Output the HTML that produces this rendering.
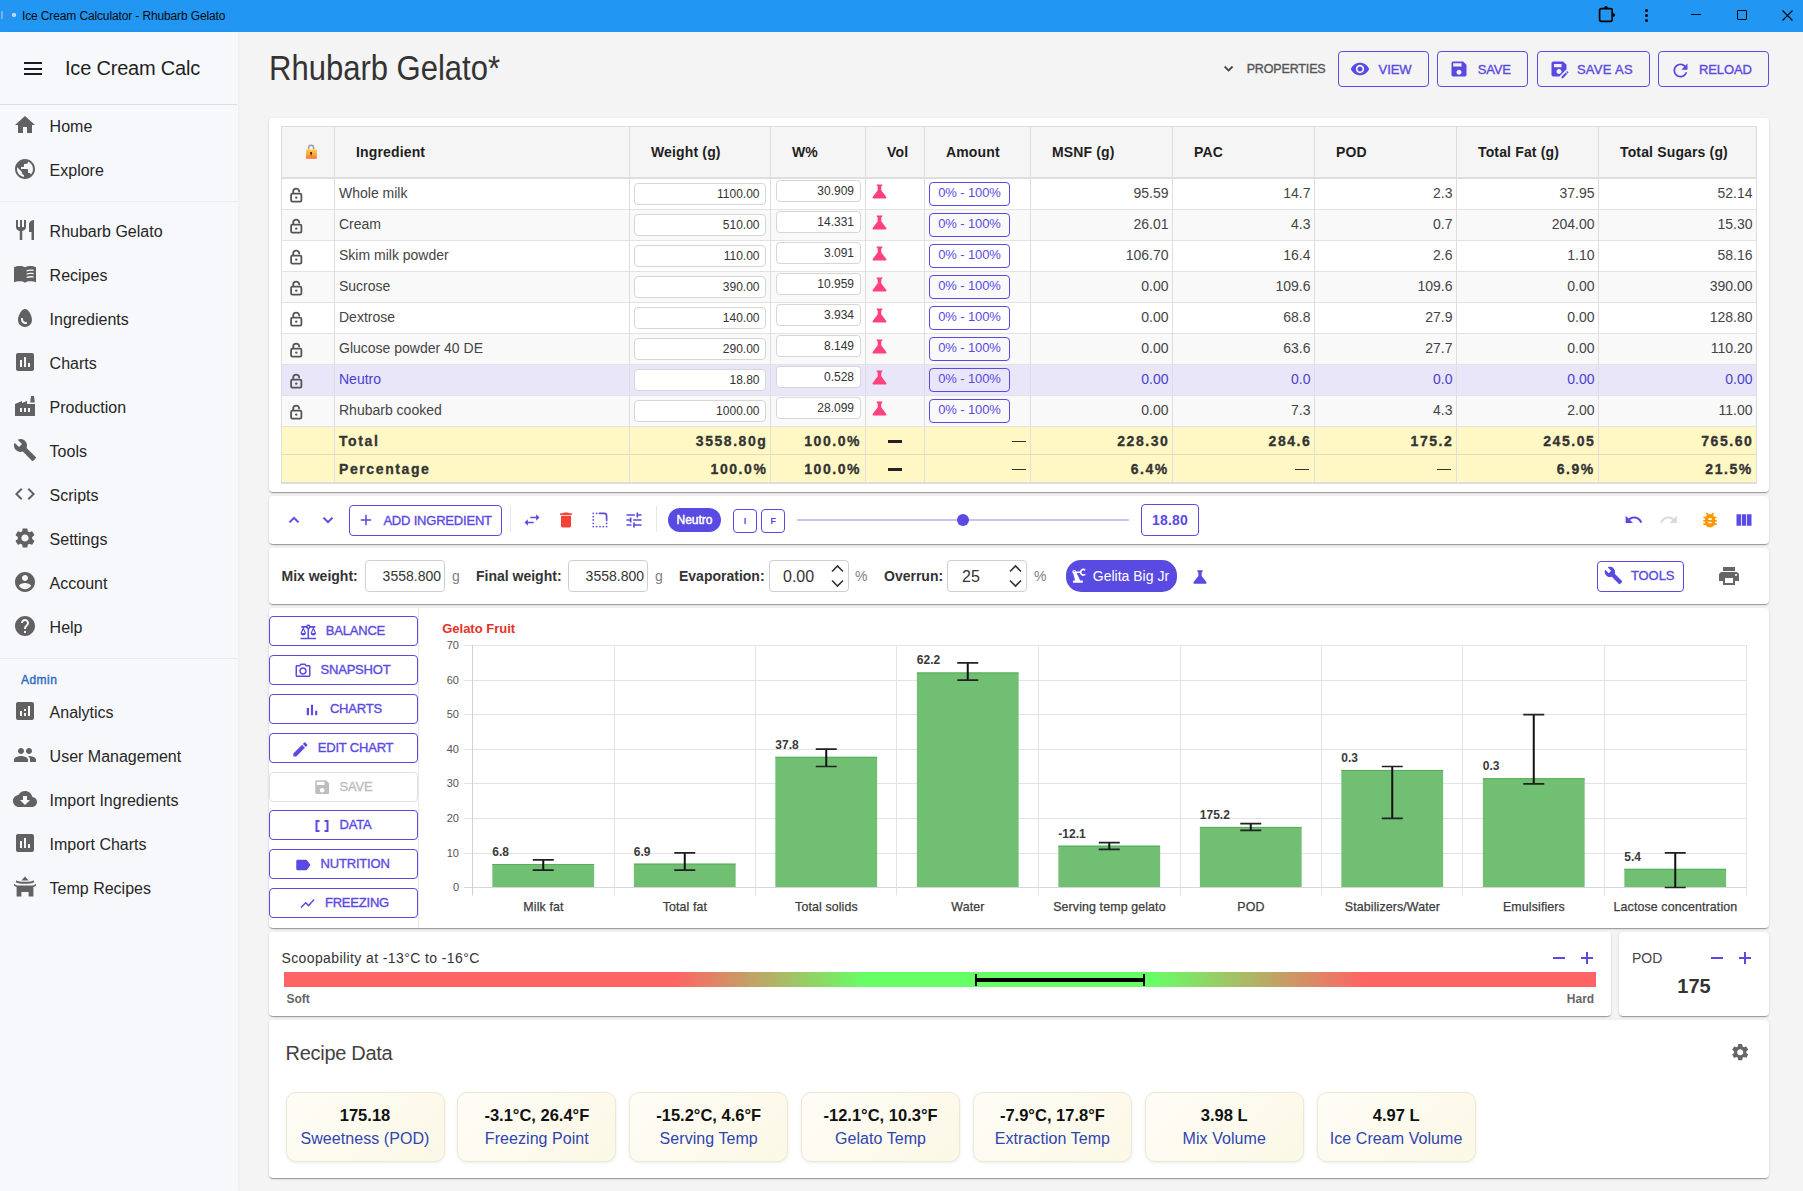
<!DOCTYPE html>
<html><head><meta charset="utf-8"><title>Ice Cream Calc</title>
<style>
html,body{margin:0;padding:0;}
body{width:1803px;height:1191px;position:relative;overflow:hidden;background:#f4f4f4;font-family:"Liberation Sans",sans-serif;}
.t{position:absolute;line-height:1;white-space:nowrap;}
.r{position:absolute;box-sizing:border-box;}
svg.r{overflow:visible;}
.card{position:absolute;background:#fff;border-radius:4px;box-shadow:0px 2px 1px -1px rgba(0,0,0,0.2),0px 1px 1px 0px rgba(0,0,0,0.14),0px 1px 3px 0px rgba(0,0,0,0.12);}
</style></head><body>
<div class="r" style="left:0px;top:0px;width:1803px;height:32px;background:#2196f3;"></div>
<svg class="r" style="left:0px;top:10px;" width="18" height="12" viewBox="0 0 18 12"><rect x="1" y="1" width="2" height="8" fill="#6cb6fa"/><circle cx="7.2" cy="5" r="3.1" fill="none" stroke="#3a8ae6" stroke-width="1.6"/><circle cx="14" cy="5" r="2.1" fill="#d6e8fb"/><circle cx="14" cy="5" r="0.8" fill="#9ab0d8"/></svg>
<div class="t" style="left:22px;top:10px;font-size:12px;color:#0a0a0a;letter-spacing:-0.13px;">Ice Cream Calculator - Rhubarb Gelato</div>
<svg class="r" style="left:1597px;top:5px;" width="20" height="18" viewBox="0 0 20 18"><rect x="2.6" y="3.6" width="12.6" height="12.8" rx="1.6" fill="none" stroke="#000" stroke-width="1.7"/><circle cx="9" cy="2.6" r="1.7" fill="#000"/><circle cx="16.4" cy="10" r="1.7" fill="#000"/></svg>
<div class="r" style="left:1645px;top:9.0px;width:3px;height:3px;background:#000;border-radius:50%;"></div>
<div class="r" style="left:1645px;top:14.0px;width:3px;height:3px;background:#000;border-radius:50%;"></div>
<div class="r" style="left:1645px;top:19.0px;width:3px;height:3px;background:#000;border-radius:50%;"></div>
<div class="r" style="left:1691px;top:14px;width:10px;height:1.2px;background:#000;"></div>
<div class="r" style="left:1737px;top:10px;width:10px;height:10px;border:1.2px solid #000;border-radius:1px;"></div>
<svg class="r" style="left:1782px;top:10px;" width="11" height="11" viewBox="0 0 11 11"><path d="M0.5 0.5L10.5 10.5M10.5 0.5L0.5 10.5" stroke="#000" stroke-width="1.1"/></svg>
<div class="r" style="left:0px;top:32px;width:238px;height:1159px;background:#f7f8fb;box-shadow:1px 0 2px rgba(0,0,0,0.03);"></div>
<div class="r" style="left:24px;top:62px;width:18px;height:2px;background:#1a1a1a;"></div>
<div class="r" style="left:24px;top:67.5px;width:18px;height:2px;background:#1a1a1a;"></div>
<div class="r" style="left:24px;top:73px;width:18px;height:2px;background:#1a1a1a;"></div>
<div class="t" style="left:65px;top:58px;font-size:20px;color:#1f1f1f;letter-spacing:-0.2px;">Ice Cream Calc</div>
<div class="r" style="left:0px;top:104px;width:237px;height:1px;background:#dcdde0;"></div>
<div class="r" style="left:0px;top:201px;width:238px;height:1px;background:#ebebef;"></div>
<div class="r" style="left:0px;top:658px;width:238px;height:1px;background:#ebebef;"></div>
<svg class="r" style="left:13px;top:113px;" width="24" height="24" viewBox="0 0 24 24"><path fill="#616161" d="M10 20v-6h4v6h5v-8h3L12 3 2 12h3v8z" style=""/></svg>
<div class="t" style="left:49.6px;top:119px;font-size:16px;color:#262626;">Home</div>
<svg class="r" style="left:13px;top:157px;" width="24" height="24" viewBox="0 0 24 24"><path fill="#616161" d="M12 2C6.48 2 2 6.48 2 12s4.48 10 10 10 10-4.48 10-10S17.52 2 12 2zm-1 17.93c-3.95-.49-7-3.85-7-7.93 0-.62.08-1.21.21-1.79L9 15v1c0 1.1.9 2 2 2v1.93zm6.9-2.54c-.26-.81-1-1.39-1.9-1.39h-1v-3c0-.55-.45-1-1-1H8v-2h2c.55 0 1-.45 1-1V7h2c1.1 0 2-.9 2-2v-.41c2.93 1.19 5 4.06 5 7.41 0 2.08-.8 3.97-2.1 5.39z" style=""/></svg>
<div class="t" style="left:49.6px;top:163px;font-size:16px;color:#262626;">Explore</div>
<svg class="r" style="left:13px;top:218px;" width="24" height="24" viewBox="0 0 24 24"><path fill="#616161" d="M11 9H9V2H7v7H5V2H3v7c0 2.12 1.66 3.84 3.75 3.97V22h2.5v-9.03C11.34 12.84 13 11.12 13 9V2h-2v7zm5-3v8h2.5v8H21V2c-2.76 0-5 2.24-5 4z" style=""/></svg>
<div class="t" style="left:49.6px;top:224px;font-size:16px;color:#262626;">Rhubarb Gelato</div>
<svg class="r" style="left:13px;top:262px;" width="24" height="24" viewBox="0 0 24 24"><path fill="#616161" d="M1 5.2c1.6-.9 3.6-1.3 5.5-1.3 2.1 0 4 .5 5.5 1.4 1.5-.9 3.4-1.4 5.5-1.4 1.9 0 3.9.4 5.5 1.3V20.4c-1.6-.8-3.6-1.1-5.5-1.1-2.1 0-4 .5-5.5 1.4-1.5-.9-3.4-1.4-5.5-1.4-1.9 0-3.9.3-5.5 1.1zM13.6 8.2v1.3c1.2-.5 2.6-.7 4-.7 1.1 0 2.1.1 3 .3V7.8c-.9-.2-1.9-.3-3-.3-1.4 0-2.8.3-4 .7zm0 3.3v1.3c1.2-.5 2.6-.7 4-.7 1.1 0 2.1.1 3 .3v-1.3c-.9-.2-1.9-.3-3-.3-1.4 0-2.8.3-4 .7zm0 3.3v1.3c1.2-.5 2.6-.7 4-.7 1.1 0 2.1.1 3 .3v-1.3c-.9-.2-1.9-.3-3-.3-1.4 0-2.8.3-4 .7z" style=""/></svg>
<div class="t" style="left:49.6px;top:268px;font-size:16px;color:#262626;">Recipes</div>
<svg class="r" style="left:13px;top:306px;" width="24" height="24" viewBox="0 0 24 24"><path fill="#616161" d="M12 3C8.5 3 5 9.33 5 14c0 3.87 3.13 7 7 7s7-3.13 7-7c0-4.67-3.5-11-7-11zm1 15c-3 0-5-1.99-5-5 0-.55.45-1 1-1s1 .45 1 1c0 2.92 2.42 3 3 3 .55 0 1 .45 1 1s-.45 1-1 1z" style=""/></svg>
<div class="t" style="left:49.6px;top:312px;font-size:16px;color:#262626;">Ingredients</div>
<svg class="r" style="left:13px;top:350px;" width="24" height="24" viewBox="0 0 24 24"><path fill="#616161" d="M19 3H5c-1.1 0-2 .9-2 2v14c0 1.1.9 2 2 2h14c1.1 0 2-.9 2-2V5c0-1.1-.9-2-2-2zM9 17H7v-7h2v7zm4 0h-2V7h2v10zm4 0h-2v-4h2v4z" style=""/></svg>
<div class="t" style="left:49.6px;top:356px;font-size:16px;color:#262626;">Charts</div>
<svg class="r" style="left:13px;top:394px;" width="24" height="24" viewBox="0 0 24 24"><path fill="#616161" d="M22 10v12H2V10l7-3v2l5-2v3h8zm-4.8-1.5L18 2h3l.8 6.5h-4.6zM11 18h2v-4h-2v4zm-4 0h2v-4H7v4zm10-4h-2v4h2v-4z" style=""/></svg>
<div class="t" style="left:49.6px;top:400px;font-size:16px;color:#262626;">Production</div>
<svg class="r" style="left:13px;top:438px;" width="24" height="24" viewBox="0 0 24 24"><path fill="#616161" d="M22.7 19l-9.1-9.1c.9-2.3.4-5-1.5-6.9-2-2-5-2.4-7.4-1.3L9 6 6 9 1.6 4.7C.4 7.1.9 10.1 2.9 12.1c1.9 1.9 4.6 2.4 6.9 1.5l9.1 9.1c.4.4 1 .4 1.4 0l2.3-2.3c.5-.4.5-1.1.1-1.4z" style=""/></svg>
<div class="t" style="left:49.6px;top:444px;font-size:16px;color:#262626;">Tools</div>
<svg class="r" style="left:13px;top:482px;" width="24" height="24" viewBox="0 0 24 24"><path fill="#616161" d="M9.4 16.6L4.8 12l4.6-4.6L8 6l-6 6 6 6 1.4-1.4zm5.2 0l4.6-4.6-4.6-4.6L16 6l6 6-6 6-1.4-1.4z" style=""/></svg>
<div class="t" style="left:49.6px;top:488px;font-size:16px;color:#262626;">Scripts</div>
<svg class="r" style="left:13px;top:526px;" width="24" height="24" viewBox="0 0 24 24"><path fill="#616161" d="M19.14 12.94c.04-.3.06-.61.06-.94 0-.32-.02-.64-.07-.94l2.03-1.58c.18-.14.23-.41.12-.61l-1.92-3.32c-.12-.22-.37-.29-.59-.22l-2.39.96c-.5-.38-1.03-.7-1.62-.94l-.36-2.54c-.04-.24-.24-.41-.48-.41h-3.84c-.24 0-.43.17-.47.41l-.36 2.54c-.59.24-1.13.57-1.62.94l-2.39-.96c-.22-.08-.47 0-.59.22L2.74 8.87c-.12.21-.08.47.12.61l2.03 1.58c-.05.3-.09.63-.09.94s.02.64.07.94l-2.03 1.58c-.18.14-.23.41-.12.61l1.92 3.32c.12.22.37.29.59.22l2.39-.96c.5.38 1.03.7 1.62.94l.36 2.54c.05.24.24.41.48.41h3.84c.24 0 .44-.17.47-.41l.36-2.54c.59-.24 1.13-.56 1.62-.94l2.39.96c.22.08.47 0 .59-.22l1.92-3.32c.12-.22.07-.47-.12-.61l-2.01-1.58zM12 15.6c-1.98 0-3.6-1.62-3.6-3.6s1.62-3.6 3.6-3.6 3.6 1.62 3.6 3.6-1.62 3.6-3.6 3.6z" style=""/></svg>
<div class="t" style="left:49.6px;top:532px;font-size:16px;color:#262626;">Settings</div>
<svg class="r" style="left:13px;top:570px;" width="24" height="24" viewBox="0 0 24 24"><path fill="#616161" d="M12 2C6.48 2 2 6.48 2 12s4.48 10 10 10 10-4.48 10-10S17.52 2 12 2zm0 3c1.66 0 3 1.34 3 3s-1.34 3-3 3-3-1.34-3-3 1.34-3 3-3zm0 14.2c-2.5 0-4.71-1.28-6-3.22.03-1.99 4-3.08 6-3.08 1.99 0 5.97 1.09 6 3.08-1.29 1.94-3.5 3.22-6 3.22z" style=""/></svg>
<div class="t" style="left:49.6px;top:576px;font-size:16px;color:#262626;">Account</div>
<svg class="r" style="left:13px;top:614px;" width="24" height="24" viewBox="0 0 24 24"><path fill="#616161" d="M12 2C6.48 2 2 6.48 2 12s4.48 10 10 10 10-4.48 10-10S17.52 2 12 2zm1 17h-2v-2h2v2zm2.07-7.75l-.9.92C13.45 12.9 13 13.5 13 15h-2v-.5c0-1.1.45-2.1 1.17-2.83l1.24-1.26c.37-.36.59-.86.59-1.41 0-1.1-.9-2-2-2s-2 .9-2 2H8c0-2.21 1.79-4 4-4s4 1.79 4 4c0 .88-.36 1.68-.93 2.25z" style=""/></svg>
<div class="t" style="left:49.6px;top:620px;font-size:16px;color:#262626;">Help</div>
<svg class="r" style="left:13px;top:699px;" width="24" height="24" viewBox="0 0 24 24"><path fill="#616161" d="M19 3H5c-1.1 0-2 .9-2 2v14c0 1.1.9 2 2 2h14c1.1 0 2-.9 2-2V5c0-1.1-.9-2-2-2zM9 17H7v-5h2v5zm4 0h-2v-3h2v3zm0-5h-2v-2h2v2zm4 5h-2V7h2v10z" style=""/></svg>
<div class="t" style="left:49.6px;top:705px;font-size:16px;color:#262626;">Analytics</div>
<svg class="r" style="left:13px;top:743px;" width="24" height="24" viewBox="0 0 24 24"><path fill="#616161" d="M16 11c1.66 0 2.99-1.34 2.99-3S17.66 5 16 5c-1.66 0-3 1.34-3 3s1.34 3 3 3zm-8 0c1.66 0 2.99-1.34 2.99-3S9.66 5 8 5C6.34 5 5 6.34 5 8s1.34 3 3 3zm0 2c-2.33 0-7 1.17-7 3.5V19h14v-2.5c0-2.33-4.67-3.5-7-3.5zm8 0c-.29 0-.62.02-.97.05 1.16.84 1.97 1.97 1.97 3.45V19h6v-2.5c0-2.33-4.67-3.5-7-3.5z" style=""/></svg>
<div class="t" style="left:49.6px;top:749px;font-size:16px;color:#262626;">User Management</div>
<svg class="r" style="left:13px;top:787px;" width="24" height="24" viewBox="0 0 24 24"><path fill="#616161" d="M19.35 10.04C18.67 6.59 15.64 4 12 4 9.11 4 6.6 5.64 5.35 8.04 2.34 8.36 0 10.91 0 14c0 3.31 2.69 6 6 6h13c2.76 0 5-2.24 5-5 0-2.64-2.05-4.78-4.65-4.96zM17 13l-5 5-5-5h3V9h4v4h3z" style=""/></svg>
<div class="t" style="left:49.6px;top:793px;font-size:16px;color:#262626;">Import Ingredients</div>
<svg class="r" style="left:13px;top:831px;" width="24" height="24" viewBox="0 0 24 24"><path fill="#616161" d="M19 3H5c-1.1 0-2 .9-2 2v14c0 1.1.9 2 2 2h14c1.1 0 2-.9 2-2V5c0-1.1-.9-2-2-2zM9 17H7v-7h2v7zm4 0h-2V7h2v10zm4 0h-2v-4h2v4z" style=""/></svg>
<div class="t" style="left:49.6px;top:837px;font-size:16px;color:#262626;">Import Charts</div>
<svg class="r" style="left:13px;top:875px;" width="24" height="24" viewBox="0 0 24 24"><path fill="#616161" d="M12 1.6L15.6 5.4H8.4zM3 5.2C6 7.4 18 7.4 21 5.2V7.2C18 9.2 6 9.2 3 7.2zM1 8.8C2.5 10.2 4 10.6 6 10.6H18C20 10.6 21.5 10.2 23 8.8V10.6C21.5 12 20 12.4 18.5 12.4H5.5C4 12.4 2.5 12 1 10.6zM3.6 12.3H20.4V21.6H15.6V17H8.4V21.6H3.6z" style=""/></svg>
<div class="t" style="left:49.6px;top:881px;font-size:16px;color:#262626;">Temp Recipes</div>
<div class="t" style="left:21px;top:674px;font-size:12px;color:#2f6bc4;letter-spacing:0.45px;-webkit-text-stroke:0.4px currentColor;">Admin</div>
<div class="t" style="left:268.8px;top:50px;font-size:35px;color:#333;transform:scaleX(0.886);transform-origin:0 0;">Rhubarb Gelato*</div>
<svg class="r" style="left:1220.4px;top:60.2px;" width="17.2" height="17.2" viewBox="0 0 24 24"><path fill="#444" d="M16.59 8.59L12 13.17 7.41 8.59 6 10l6 6 6-6z" style="stroke:#444;stroke-width:0.9px;"/></svg>
<div class="t" style="left:1246.7px;top:63px;font-size:12.5px;color:#555;letter-spacing:-0.15px;-webkit-text-stroke:0.35px currentColor;">PROPERTIES</div>
<div class="r" style="left:1338px;top:51px;width:91px;height:36px;border:1px solid #594ae2;border-radius:4px;background:transparent;"></div>
<svg class="r" style="left:1350px;top:59px;" width="20" height="20" viewBox="0 0 24 24"><path fill="#594ae2" d="M12 4.5C7 4.5 2.73 7.61 1 12c1.73 4.39 6 7.5 11 7.5s9.27-3.11 11-7.5c-1.73-4.39-6-7.5-11-7.5zM12 17c-2.76 0-5-2.24-5-5s2.24-5 5-5 5 2.24 5 5-2.24 5-5 5zm0-8c-1.66 0-3 1.34-3 3s1.34 3 3 3 3-1.34 3-3-1.34-3-3-3z" style=""/></svg>
<div class="t" style="left:1378.6px;top:63px;font-size:13px;color:#594ae2;letter-spacing:-0.1px;-webkit-text-stroke:0.35px currentColor;">VIEW</div>
<div class="r" style="left:1437px;top:51px;width:91px;height:36px;border:1px solid #594ae2;border-radius:4px;background:transparent;"></div>
<svg class="r" style="left:1449px;top:59px;" width="20" height="20" viewBox="0 0 24 24"><path fill="#594ae2" d="M17 3H5c-1.11 0-2 .9-2 2v14c0 1.1.89 2 2 2h14c1.1 0 2-.9 2-2V7l-4-4zm-5 16c-1.66 0-3-1.34-3-3s1.34-3 3-3 3 1.34 3 3-1.34 3-3 3zm3-10H5V5h10v4z" style=""/></svg>
<div class="t" style="left:1477.8px;top:63px;font-size:13px;color:#594ae2;letter-spacing:-0.2px;-webkit-text-stroke:0.35px currentColor;">SAVE</div>
<div class="r" style="left:1537px;top:51px;width:113px;height:36px;border:1px solid #594ae2;border-radius:4px;background:transparent;"></div>
<svg class="r" style="left:1548.5px;top:59px;" width="20" height="20" viewBox="0 0 24 24"><path fill="#594ae2" d="M21 12.4V7l-4-4H5c-1.11 0-2 .9-2 2v14c0 1.1.89 2 2 2h7.4l8.6-8.6zM15 15c0 1.66-1.34 3-3 3s-3-1.34-3-3 1.34-3 3-3 3 1.34 3 3zM6 6h9v4H6V6zm13.99 10.25l1.77 1.77L16.77 23H15v-1.77l4.99-4.98zm3.26.26l-.85.85-1.77-1.77.85-.85c.2-.2.51-.2.71 0l1.06 1.06c.2.2.2.52 0 .71z" style=""/></svg>
<div class="t" style="left:1576.9px;top:63px;font-size:13px;color:#594ae2;letter-spacing:0.3px;-webkit-text-stroke:0.35px currentColor;">SAVE AS</div>
<div class="r" style="left:1658px;top:51px;width:111px;height:36px;border:1px solid #594ae2;border-radius:4px;background:transparent;"></div>
<svg class="r" style="left:1669.5px;top:59.5px;" width="21" height="21" viewBox="0 0 24 24"><path fill="#594ae2" d="M17.65 6.35C16.2 4.9 14.21 4 12 4c-4.42 0-7.99 3.58-7.99 8s3.57 8 7.99 8c3.73 0 6.84-2.55 7.73-6h-2.08c-.82 2.33-3.04 4-5.65 4-3.31 0-6-2.69-6-6s2.69-6 6-6c1.66 0 3.14.69 4.22 1.78L13 11h7V4l-2.35 2.35z" style=""/></svg>
<div class="t" style="left:1699px;top:63px;font-size:13px;color:#594ae2;letter-spacing:-0.1px;-webkit-text-stroke:0.35px currentColor;">RELOAD</div>
<div class="card" style="left:269px;top:118px;width:1500px;height:374px;"></div>
<div class="card" style="left:269px;top:496px;width:1500px;height:48px;"></div>
<div class="card" style="left:269px;top:548px;width:1500px;height:56px;"></div>
<div class="card" style="left:269px;top:608px;width:1500px;height:320px;"></div>
<div class="card" style="left:269px;top:932px;width:1342px;height:84px;"></div>
<div class="card" style="left:1619px;top:932px;width:150px;height:84px;"></div>
<div class="card" style="left:269px;top:1020px;width:1500px;height:158px;"></div>
<div class="r" style="left:281px;top:126px;width:1476px;height:51px;background:#f5f5f5;"></div>
<div class="r" style="left:281px;top:179px;width:1476px;height:30px;background:#ffffff;"></div>
<div class="r" style="left:281px;top:209px;width:1476px;height:31px;background:#f9f9f9;"></div>
<div class="r" style="left:281px;top:240px;width:1476px;height:31px;background:#ffffff;"></div>
<div class="r" style="left:281px;top:271px;width:1476px;height:31px;background:#f9f9f9;"></div>
<div class="r" style="left:281px;top:302px;width:1476px;height:31px;background:#ffffff;"></div>
<div class="r" style="left:281px;top:333px;width:1476px;height:31px;background:#f9f9f9;"></div>
<div class="r" style="left:281px;top:364px;width:1476px;height:31px;background:#e8e6f8;"></div>
<div class="r" style="left:281px;top:395px;width:1476px;height:31px;background:#f9f9f9;"></div>
<div class="r" style="left:281px;top:426px;width:1476px;height:57px;background:#fff8c5;"></div>
<div class="r" style="left:281px;top:126px;width:1476px;height:1px;background:#dcdcdc;"></div>
<div class="r" style="left:281px;top:177px;width:1476px;height:2px;background:#dedede;"></div>
<div class="r" style="left:281px;top:209px;width:1476px;height:1px;background:#e3e3e3;"></div>
<div class="r" style="left:281px;top:240px;width:1476px;height:1px;background:#e3e3e3;"></div>
<div class="r" style="left:281px;top:271px;width:1476px;height:1px;background:#e3e3e3;"></div>
<div class="r" style="left:281px;top:302px;width:1476px;height:1px;background:#e3e3e3;"></div>
<div class="r" style="left:281px;top:333px;width:1476px;height:1px;background:#e3e3e3;"></div>
<div class="r" style="left:281px;top:364px;width:1476px;height:1px;background:#e3e3e3;"></div>
<div class="r" style="left:281px;top:395px;width:1476px;height:1px;background:#e3e3e3;"></div>
<div class="r" style="left:281px;top:426px;width:1476px;height:1px;background:#e3e3e3;"></div>
<div class="r" style="left:281px;top:454px;width:1476px;height:1px;background:#e0dcc0;"></div>
<div class="r" style="left:281px;top:482px;width:1476px;height:2px;background:#dddddd;"></div>
<div class="r" style="left:281px;top:126px;width:1px;height:357px;background:#dedede;"></div>
<div class="r" style="left:334px;top:126px;width:1px;height:357px;background:#dedede;"></div>
<div class="r" style="left:629px;top:126px;width:1px;height:357px;background:#dedede;"></div>
<div class="r" style="left:770px;top:126px;width:1px;height:357px;background:#dedede;"></div>
<div class="r" style="left:865px;top:126px;width:1px;height:357px;background:#dedede;"></div>
<div class="r" style="left:924px;top:126px;width:1px;height:357px;background:#dedede;"></div>
<div class="r" style="left:1030px;top:126px;width:1px;height:357px;background:#dedede;"></div>
<div class="r" style="left:1172px;top:126px;width:1px;height:357px;background:#dedede;"></div>
<div class="r" style="left:1314px;top:126px;width:1px;height:357px;background:#dedede;"></div>
<div class="r" style="left:1456px;top:126px;width:1px;height:357px;background:#dedede;"></div>
<div class="r" style="left:1598px;top:126px;width:1px;height:357px;background:#dedede;"></div>
<div class="r" style="left:1756px;top:126px;width:1px;height:357px;background:#dedede;"></div>
<div class="t" style="left:356px;top:145px;font-size:14px;color:#1e1e1e;font-weight:700;letter-spacing:0.15px;">Ingredient</div>
<div class="t" style="left:651px;top:145px;font-size:14px;color:#1e1e1e;font-weight:700;letter-spacing:0.15px;">Weight (g)</div>
<div class="t" style="left:792px;top:145px;font-size:14px;color:#1e1e1e;font-weight:700;letter-spacing:0.15px;">W%</div>
<div class="t" style="left:887px;top:145px;font-size:14px;color:#1e1e1e;font-weight:700;letter-spacing:0.15px;">Vol</div>
<div class="t" style="left:946px;top:145px;font-size:14px;color:#1e1e1e;font-weight:700;letter-spacing:0.15px;">Amount</div>
<div class="t" style="left:1052px;top:145px;font-size:14px;color:#1e1e1e;font-weight:700;letter-spacing:0.15px;">MSNF (g)</div>
<div class="t" style="left:1194px;top:145px;font-size:14px;color:#1e1e1e;font-weight:700;letter-spacing:0.15px;">PAC</div>
<div class="t" style="left:1336px;top:145px;font-size:14px;color:#1e1e1e;font-weight:700;letter-spacing:0.15px;">POD</div>
<div class="t" style="left:1478px;top:145px;font-size:14px;color:#1e1e1e;font-weight:700;letter-spacing:0.15px;">Total Fat (g)</div>
<div class="t" style="left:1620px;top:145px;font-size:14px;color:#1e1e1e;font-weight:700;letter-spacing:0.15px;">Total Sugars (g)</div>
<svg class="r" style="left:303px;top:144px;" width="16" height="16" viewBox="0 0 16 16"><defs><linearGradient id="lg" x1="0" y1="0" x2="0" y2="1"><stop offset="0" stop-color="#ffcf40"/><stop offset="0.6" stop-color="#ffa03c"/><stop offset="1" stop-color="#ff6a38"/></linearGradient></defs><path d="M5.6 5.6V3.8a2.5 2.5 0 0 1 5 0V5.6" fill="none" stroke="#9b9bb0" stroke-width="1.5"/><rect x="3" y="5.4" width="10.9" height="9.4" rx="0.8" fill="url(#lg)"/><circle cx="8.1" cy="9.1" r="1.1" fill="#3a1f10"/><path d="M7.6 9.5h1l-.2 2.3h-.6z" fill="#3a1f10"/></svg>
<svg class="r" style="left:289px;top:187px;" width="14" height="16" viewBox="0 0 14 16"><rect x="2.1" y="6.6" width="10.3" height="8" rx="1.3" fill="none" stroke="#555" stroke-width="1.8"/><path d="M4.2 6.6V4.6a3 3 0 0 1 6 0V5.2" fill="none" stroke="#555" stroke-width="1.8"/><circle cx="7.25" cy="10.6" r="1.2" fill="#555"/></svg>
<div class="t" style="left:339px;top:186px;font-size:14px;color:#444;">Whole milk</div>
<div class="r" style="left:634px;top:183px;width:131.5px;height:22px;border:1px solid #d6d6d6;border-radius:4px;background:#fff;"></div>
<div class="t" style="left:159.5px;width:600px;text-align:right;top:188px;font-size:12px;color:#333;">1100.00</div>
<div class="r" style="left:775.5px;top:180px;width:85px;height:22px;border:1px solid #d6d6d6;border-radius:4px;background:#fff;"></div>
<div class="t" style="left:254px;width:600px;text-align:right;top:185px;font-size:12px;color:#333;">30.909</div>
<svg class="r" style="left:869.3px;top:180.6px;" width="21" height="21" viewBox="0 0 24 24"><path fill="#ff4081" d="M19.8,18.4L14,10.67V6.5l1.35-1.69C15.61,4.48,15.38,4,14.96,4H9.04C8.62,4,8.39,4.48,8.65,4.81L10,6.5v4.17L4.2,18.4C3.71,19.06,4.18,20,5,20h14C19.82,20,20.29,19.06,19.8,18.4z" style=""/></svg>
<div class="r" style="left:929px;top:182px;width:81px;height:24px;border:1px solid #594ae2;border-radius:4px;"></div>
<div class="t" style="left:669.5px;width:600px;text-align:center;top:186px;font-size:13px;color:#594ae2;letter-spacing:-0.12px;">0% - 100%</div>
<div class="t" style="left:568.5px;width:600px;text-align:right;top:186px;font-size:14px;color:#444;">95.59</div>
<div class="t" style="left:710.5px;width:600px;text-align:right;top:186px;font-size:14px;color:#444;">14.7</div>
<div class="t" style="left:852.5px;width:600px;text-align:right;top:186px;font-size:14px;color:#444;">2.3</div>
<div class="t" style="left:994.5px;width:600px;text-align:right;top:186px;font-size:14px;color:#444;">37.95</div>
<div class="t" style="left:1152.5px;width:600px;text-align:right;top:186px;font-size:14px;color:#444;">52.14</div>
<svg class="r" style="left:289px;top:218px;" width="14" height="16" viewBox="0 0 14 16"><rect x="2.1" y="6.6" width="10.3" height="8" rx="1.3" fill="none" stroke="#555" stroke-width="1.8"/><path d="M4.2 6.6V4.6a3 3 0 0 1 6 0V5.2" fill="none" stroke="#555" stroke-width="1.8"/><circle cx="7.25" cy="10.6" r="1.2" fill="#555"/></svg>
<div class="t" style="left:339px;top:217px;font-size:14px;color:#444;">Cream</div>
<div class="r" style="left:634px;top:214px;width:131.5px;height:22px;border:1px solid #d6d6d6;border-radius:4px;background:#fff;"></div>
<div class="t" style="left:159.5px;width:600px;text-align:right;top:219px;font-size:12px;color:#333;">510.00</div>
<div class="r" style="left:775.5px;top:211px;width:85px;height:22px;border:1px solid #d6d6d6;border-radius:4px;background:#fff;"></div>
<div class="t" style="left:254px;width:600px;text-align:right;top:216px;font-size:12px;color:#333;">14.331</div>
<svg class="r" style="left:869.3px;top:211.6px;" width="21" height="21" viewBox="0 0 24 24"><path fill="#ff4081" d="M19.8,18.4L14,10.67V6.5l1.35-1.69C15.61,4.48,15.38,4,14.96,4H9.04C8.62,4,8.39,4.48,8.65,4.81L10,6.5v4.17L4.2,18.4C3.71,19.06,4.18,20,5,20h14C19.82,20,20.29,19.06,19.8,18.4z" style=""/></svg>
<div class="r" style="left:929px;top:213px;width:81px;height:24px;border:1px solid #594ae2;border-radius:4px;"></div>
<div class="t" style="left:669.5px;width:600px;text-align:center;top:217px;font-size:13px;color:#594ae2;letter-spacing:-0.12px;">0% - 100%</div>
<div class="t" style="left:568.5px;width:600px;text-align:right;top:217px;font-size:14px;color:#444;">26.01</div>
<div class="t" style="left:710.5px;width:600px;text-align:right;top:217px;font-size:14px;color:#444;">4.3</div>
<div class="t" style="left:852.5px;width:600px;text-align:right;top:217px;font-size:14px;color:#444;">0.7</div>
<div class="t" style="left:994.5px;width:600px;text-align:right;top:217px;font-size:14px;color:#444;">204.00</div>
<div class="t" style="left:1152.5px;width:600px;text-align:right;top:217px;font-size:14px;color:#444;">15.30</div>
<svg class="r" style="left:289px;top:249px;" width="14" height="16" viewBox="0 0 14 16"><rect x="2.1" y="6.6" width="10.3" height="8" rx="1.3" fill="none" stroke="#555" stroke-width="1.8"/><path d="M4.2 6.6V4.6a3 3 0 0 1 6 0V5.2" fill="none" stroke="#555" stroke-width="1.8"/><circle cx="7.25" cy="10.6" r="1.2" fill="#555"/></svg>
<div class="t" style="left:339px;top:248px;font-size:14px;color:#444;">Skim milk powder</div>
<div class="r" style="left:634px;top:245px;width:131.5px;height:22px;border:1px solid #d6d6d6;border-radius:4px;background:#fff;"></div>
<div class="t" style="left:159.5px;width:600px;text-align:right;top:250px;font-size:12px;color:#333;">110.00</div>
<div class="r" style="left:775.5px;top:242px;width:85px;height:22px;border:1px solid #d6d6d6;border-radius:4px;background:#fff;"></div>
<div class="t" style="left:254px;width:600px;text-align:right;top:247px;font-size:12px;color:#333;">3.091</div>
<svg class="r" style="left:869.3px;top:242.6px;" width="21" height="21" viewBox="0 0 24 24"><path fill="#ff4081" d="M19.8,18.4L14,10.67V6.5l1.35-1.69C15.61,4.48,15.38,4,14.96,4H9.04C8.62,4,8.39,4.48,8.65,4.81L10,6.5v4.17L4.2,18.4C3.71,19.06,4.18,20,5,20h14C19.82,20,20.29,19.06,19.8,18.4z" style=""/></svg>
<div class="r" style="left:929px;top:244px;width:81px;height:24px;border:1px solid #594ae2;border-radius:4px;"></div>
<div class="t" style="left:669.5px;width:600px;text-align:center;top:248px;font-size:13px;color:#594ae2;letter-spacing:-0.12px;">0% - 100%</div>
<div class="t" style="left:568.5px;width:600px;text-align:right;top:248px;font-size:14px;color:#444;">106.70</div>
<div class="t" style="left:710.5px;width:600px;text-align:right;top:248px;font-size:14px;color:#444;">16.4</div>
<div class="t" style="left:852.5px;width:600px;text-align:right;top:248px;font-size:14px;color:#444;">2.6</div>
<div class="t" style="left:994.5px;width:600px;text-align:right;top:248px;font-size:14px;color:#444;">1.10</div>
<div class="t" style="left:1152.5px;width:600px;text-align:right;top:248px;font-size:14px;color:#444;">58.16</div>
<svg class="r" style="left:289px;top:280px;" width="14" height="16" viewBox="0 0 14 16"><rect x="2.1" y="6.6" width="10.3" height="8" rx="1.3" fill="none" stroke="#555" stroke-width="1.8"/><path d="M4.2 6.6V4.6a3 3 0 0 1 6 0V5.2" fill="none" stroke="#555" stroke-width="1.8"/><circle cx="7.25" cy="10.6" r="1.2" fill="#555"/></svg>
<div class="t" style="left:339px;top:279px;font-size:14px;color:#444;">Sucrose</div>
<div class="r" style="left:634px;top:276px;width:131.5px;height:22px;border:1px solid #d6d6d6;border-radius:4px;background:#fff;"></div>
<div class="t" style="left:159.5px;width:600px;text-align:right;top:281px;font-size:12px;color:#333;">390.00</div>
<div class="r" style="left:775.5px;top:273px;width:85px;height:22px;border:1px solid #d6d6d6;border-radius:4px;background:#fff;"></div>
<div class="t" style="left:254px;width:600px;text-align:right;top:278px;font-size:12px;color:#333;">10.959</div>
<svg class="r" style="left:869.3px;top:273.6px;" width="21" height="21" viewBox="0 0 24 24"><path fill="#ff4081" d="M19.8,18.4L14,10.67V6.5l1.35-1.69C15.61,4.48,15.38,4,14.96,4H9.04C8.62,4,8.39,4.48,8.65,4.81L10,6.5v4.17L4.2,18.4C3.71,19.06,4.18,20,5,20h14C19.82,20,20.29,19.06,19.8,18.4z" style=""/></svg>
<div class="r" style="left:929px;top:275px;width:81px;height:24px;border:1px solid #594ae2;border-radius:4px;"></div>
<div class="t" style="left:669.5px;width:600px;text-align:center;top:279px;font-size:13px;color:#594ae2;letter-spacing:-0.12px;">0% - 100%</div>
<div class="t" style="left:568.5px;width:600px;text-align:right;top:279px;font-size:14px;color:#444;">0.00</div>
<div class="t" style="left:710.5px;width:600px;text-align:right;top:279px;font-size:14px;color:#444;">109.6</div>
<div class="t" style="left:852.5px;width:600px;text-align:right;top:279px;font-size:14px;color:#444;">109.6</div>
<div class="t" style="left:994.5px;width:600px;text-align:right;top:279px;font-size:14px;color:#444;">0.00</div>
<div class="t" style="left:1152.5px;width:600px;text-align:right;top:279px;font-size:14px;color:#444;">390.00</div>
<svg class="r" style="left:289px;top:311px;" width="14" height="16" viewBox="0 0 14 16"><rect x="2.1" y="6.6" width="10.3" height="8" rx="1.3" fill="none" stroke="#555" stroke-width="1.8"/><path d="M4.2 6.6V4.6a3 3 0 0 1 6 0V5.2" fill="none" stroke="#555" stroke-width="1.8"/><circle cx="7.25" cy="10.6" r="1.2" fill="#555"/></svg>
<div class="t" style="left:339px;top:310px;font-size:14px;color:#444;">Dextrose</div>
<div class="r" style="left:634px;top:307px;width:131.5px;height:22px;border:1px solid #d6d6d6;border-radius:4px;background:#fff;"></div>
<div class="t" style="left:159.5px;width:600px;text-align:right;top:312px;font-size:12px;color:#333;">140.00</div>
<div class="r" style="left:775.5px;top:304px;width:85px;height:22px;border:1px solid #d6d6d6;border-radius:4px;background:#fff;"></div>
<div class="t" style="left:254px;width:600px;text-align:right;top:309px;font-size:12px;color:#333;">3.934</div>
<svg class="r" style="left:869.3px;top:304.6px;" width="21" height="21" viewBox="0 0 24 24"><path fill="#ff4081" d="M19.8,18.4L14,10.67V6.5l1.35-1.69C15.61,4.48,15.38,4,14.96,4H9.04C8.62,4,8.39,4.48,8.65,4.81L10,6.5v4.17L4.2,18.4C3.71,19.06,4.18,20,5,20h14C19.82,20,20.29,19.06,19.8,18.4z" style=""/></svg>
<div class="r" style="left:929px;top:306px;width:81px;height:24px;border:1px solid #594ae2;border-radius:4px;"></div>
<div class="t" style="left:669.5px;width:600px;text-align:center;top:310px;font-size:13px;color:#594ae2;letter-spacing:-0.12px;">0% - 100%</div>
<div class="t" style="left:568.5px;width:600px;text-align:right;top:310px;font-size:14px;color:#444;">0.00</div>
<div class="t" style="left:710.5px;width:600px;text-align:right;top:310px;font-size:14px;color:#444;">68.8</div>
<div class="t" style="left:852.5px;width:600px;text-align:right;top:310px;font-size:14px;color:#444;">27.9</div>
<div class="t" style="left:994.5px;width:600px;text-align:right;top:310px;font-size:14px;color:#444;">0.00</div>
<div class="t" style="left:1152.5px;width:600px;text-align:right;top:310px;font-size:14px;color:#444;">128.80</div>
<svg class="r" style="left:289px;top:342px;" width="14" height="16" viewBox="0 0 14 16"><rect x="2.1" y="6.6" width="10.3" height="8" rx="1.3" fill="none" stroke="#555" stroke-width="1.8"/><path d="M4.2 6.6V4.6a3 3 0 0 1 6 0V5.2" fill="none" stroke="#555" stroke-width="1.8"/><circle cx="7.25" cy="10.6" r="1.2" fill="#555"/></svg>
<div class="t" style="left:339px;top:341px;font-size:14px;color:#444;">Glucose powder 40 DE</div>
<div class="r" style="left:634px;top:338px;width:131.5px;height:22px;border:1px solid #d6d6d6;border-radius:4px;background:#fff;"></div>
<div class="t" style="left:159.5px;width:600px;text-align:right;top:343px;font-size:12px;color:#333;">290.00</div>
<div class="r" style="left:775.5px;top:335px;width:85px;height:22px;border:1px solid #d6d6d6;border-radius:4px;background:#fff;"></div>
<div class="t" style="left:254px;width:600px;text-align:right;top:340px;font-size:12px;color:#333;">8.149</div>
<svg class="r" style="left:869.3px;top:335.6px;" width="21" height="21" viewBox="0 0 24 24"><path fill="#ff4081" d="M19.8,18.4L14,10.67V6.5l1.35-1.69C15.61,4.48,15.38,4,14.96,4H9.04C8.62,4,8.39,4.48,8.65,4.81L10,6.5v4.17L4.2,18.4C3.71,19.06,4.18,20,5,20h14C19.82,20,20.29,19.06,19.8,18.4z" style=""/></svg>
<div class="r" style="left:929px;top:337px;width:81px;height:24px;border:1px solid #594ae2;border-radius:4px;"></div>
<div class="t" style="left:669.5px;width:600px;text-align:center;top:341px;font-size:13px;color:#594ae2;letter-spacing:-0.12px;">0% - 100%</div>
<div class="t" style="left:568.5px;width:600px;text-align:right;top:341px;font-size:14px;color:#444;">0.00</div>
<div class="t" style="left:710.5px;width:600px;text-align:right;top:341px;font-size:14px;color:#444;">63.6</div>
<div class="t" style="left:852.5px;width:600px;text-align:right;top:341px;font-size:14px;color:#444;">27.7</div>
<div class="t" style="left:994.5px;width:600px;text-align:right;top:341px;font-size:14px;color:#444;">0.00</div>
<div class="t" style="left:1152.5px;width:600px;text-align:right;top:341px;font-size:14px;color:#444;">110.20</div>
<svg class="r" style="left:289px;top:373px;" width="14" height="16" viewBox="0 0 14 16"><rect x="2.1" y="6.6" width="10.3" height="8" rx="1.3" fill="none" stroke="#555" stroke-width="1.8"/><path d="M4.2 6.6V4.6a3 3 0 0 1 6 0V5.2" fill="none" stroke="#555" stroke-width="1.8"/><circle cx="7.25" cy="10.6" r="1.2" fill="#555"/></svg>
<div class="t" style="left:339px;top:372px;font-size:14px;color:#4a3fd0;">Neutro</div>
<div class="r" style="left:634px;top:369px;width:131.5px;height:22px;border:1px solid #d6d6d6;border-radius:4px;background:#fff;"></div>
<div class="t" style="left:159.5px;width:600px;text-align:right;top:374px;font-size:12px;color:#333;">18.80</div>
<div class="r" style="left:775.5px;top:366px;width:85px;height:22px;border:1px solid #d6d6d6;border-radius:4px;background:#fff;"></div>
<div class="t" style="left:254px;width:600px;text-align:right;top:371px;font-size:12px;color:#333;">0.528</div>
<svg class="r" style="left:869.3px;top:366.6px;" width="21" height="21" viewBox="0 0 24 24"><path fill="#ff4081" d="M19.8,18.4L14,10.67V6.5l1.35-1.69C15.61,4.48,15.38,4,14.96,4H9.04C8.62,4,8.39,4.48,8.65,4.81L10,6.5v4.17L4.2,18.4C3.71,19.06,4.18,20,5,20h14C19.82,20,20.29,19.06,19.8,18.4z" style=""/></svg>
<div class="r" style="left:929px;top:368px;width:81px;height:24px;border:1px solid #594ae2;border-radius:4px;"></div>
<div class="t" style="left:669.5px;width:600px;text-align:center;top:372px;font-size:13px;color:#594ae2;letter-spacing:-0.12px;">0% - 100%</div>
<div class="t" style="left:568.5px;width:600px;text-align:right;top:372px;font-size:14px;color:#4a3fd0;">0.00</div>
<div class="t" style="left:710.5px;width:600px;text-align:right;top:372px;font-size:14px;color:#4a3fd0;">0.0</div>
<div class="t" style="left:852.5px;width:600px;text-align:right;top:372px;font-size:14px;color:#4a3fd0;">0.0</div>
<div class="t" style="left:994.5px;width:600px;text-align:right;top:372px;font-size:14px;color:#4a3fd0;">0.00</div>
<div class="t" style="left:1152.5px;width:600px;text-align:right;top:372px;font-size:14px;color:#4a3fd0;">0.00</div>
<svg class="r" style="left:289px;top:404px;" width="14" height="16" viewBox="0 0 14 16"><rect x="2.1" y="6.6" width="10.3" height="8" rx="1.3" fill="none" stroke="#555" stroke-width="1.8"/><path d="M4.2 6.6V4.6a3 3 0 0 1 6 0V5.2" fill="none" stroke="#555" stroke-width="1.8"/><circle cx="7.25" cy="10.6" r="1.2" fill="#555"/></svg>
<div class="t" style="left:339px;top:403px;font-size:14px;color:#444;">Rhubarb cooked</div>
<div class="r" style="left:634px;top:400px;width:131.5px;height:22px;border:1px solid #d6d6d6;border-radius:4px;background:#fff;"></div>
<div class="t" style="left:159.5px;width:600px;text-align:right;top:405px;font-size:12px;color:#333;">1000.00</div>
<div class="r" style="left:775.5px;top:397px;width:85px;height:22px;border:1px solid #d6d6d6;border-radius:4px;background:#fff;"></div>
<div class="t" style="left:254px;width:600px;text-align:right;top:402px;font-size:12px;color:#333;">28.099</div>
<svg class="r" style="left:869.3px;top:397.6px;" width="21" height="21" viewBox="0 0 24 24"><path fill="#ff4081" d="M19.8,18.4L14,10.67V6.5l1.35-1.69C15.61,4.48,15.38,4,14.96,4H9.04C8.62,4,8.39,4.48,8.65,4.81L10,6.5v4.17L4.2,18.4C3.71,19.06,4.18,20,5,20h14C19.82,20,20.29,19.06,19.8,18.4z" style=""/></svg>
<div class="r" style="left:929px;top:399px;width:81px;height:24px;border:1px solid #594ae2;border-radius:4px;"></div>
<div class="t" style="left:669.5px;width:600px;text-align:center;top:403px;font-size:13px;color:#594ae2;letter-spacing:-0.12px;">0% - 100%</div>
<div class="t" style="left:568.5px;width:600px;text-align:right;top:403px;font-size:14px;color:#444;">0.00</div>
<div class="t" style="left:710.5px;width:600px;text-align:right;top:403px;font-size:14px;color:#444;">7.3</div>
<div class="t" style="left:852.5px;width:600px;text-align:right;top:403px;font-size:14px;color:#444;">4.3</div>
<div class="t" style="left:994.5px;width:600px;text-align:right;top:403px;font-size:14px;color:#444;">2.00</div>
<div class="t" style="left:1152.5px;width:600px;text-align:right;top:403px;font-size:14px;color:#444;">11.00</div>
<div class="t" style="left:339px;top:434px;font-size:14px;color:#333;font-weight:700;letter-spacing:1.6px;-webkit-text-stroke:0.3px #333;">Total</div>
<div class="t" style="left:339px;top:462px;font-size:14px;color:#333;font-weight:700;letter-spacing:1.6px;-webkit-text-stroke:0.3px #333;">Percentage</div>
<div class="t" style="left:167.39999999999998px;width:600px;text-align:right;top:434px;font-size:14px;color:#333;font-weight:700;letter-spacing:1.55px;-webkit-text-stroke:0.3px #333;">3558.80g</div>
<div class="t" style="left:261px;width:600px;text-align:right;top:434px;font-size:14px;color:#333;font-weight:700;letter-spacing:1.55px;-webkit-text-stroke:0.3px #333;">100.0%</div>
<div class="t" style="left:167.39999999999998px;width:600px;text-align:right;top:462px;font-size:14px;color:#333;font-weight:700;letter-spacing:1.55px;-webkit-text-stroke:0.3px #333;">100.0%</div>
<div class="t" style="left:261px;width:600px;text-align:right;top:462px;font-size:14px;color:#333;font-weight:700;letter-spacing:1.55px;-webkit-text-stroke:0.3px #333;">100.0%</div>
<div class="r" style="left:888px;top:440px;width:14px;height:2.5px;background:#222;"></div>
<div class="r" style="left:1011.5px;top:441px;width:14px;height:1.3px;background:#333;"></div>
<div class="r" style="left:888px;top:468px;width:14px;height:2.5px;background:#222;"></div>
<div class="r" style="left:1011.5px;top:469px;width:14px;height:1.3px;background:#333;"></div>
<div class="t" style="left:569.4000000000001px;width:600px;text-align:right;top:434px;font-size:14px;color:#333;font-weight:700;letter-spacing:1.55px;-webkit-text-stroke:0.3px #333;">228.30</div>
<div class="t" style="left:568.8px;width:600px;text-align:right;top:462px;font-size:14px;color:#333;font-weight:700;letter-spacing:1.55px;-webkit-text-stroke:0.3px #333;">6.4%</div>
<div class="t" style="left:711.4000000000001px;width:600px;text-align:right;top:434px;font-size:14px;color:#333;font-weight:700;letter-spacing:1.55px;-webkit-text-stroke:0.3px #333;">284.6</div>
<div class="r" style="left:1295px;top:469px;width:14px;height:1.3px;background:#333;"></div>
<div class="t" style="left:853.4000000000001px;width:600px;text-align:right;top:434px;font-size:14px;color:#333;font-weight:700;letter-spacing:1.55px;-webkit-text-stroke:0.3px #333;">175.2</div>
<div class="r" style="left:1437px;top:469px;width:14px;height:1.3px;background:#333;"></div>
<div class="t" style="left:995.4000000000001px;width:600px;text-align:right;top:434px;font-size:14px;color:#333;font-weight:700;letter-spacing:1.55px;-webkit-text-stroke:0.3px #333;">245.05</div>
<div class="t" style="left:994.8px;width:600px;text-align:right;top:462px;font-size:14px;color:#333;font-weight:700;letter-spacing:1.55px;-webkit-text-stroke:0.3px #333;">6.9%</div>
<div class="t" style="left:1153.4px;width:600px;text-align:right;top:434px;font-size:14px;color:#333;font-weight:700;letter-spacing:1.55px;-webkit-text-stroke:0.3px #333;">765.60</div>
<div class="t" style="left:1152.8px;width:600px;text-align:right;top:462px;font-size:14px;color:#333;font-weight:700;letter-spacing:1.55px;-webkit-text-stroke:0.3px #333;">21.5%</div>
<svg class="r" style="left:284px;top:510px;" width="20" height="20" viewBox="0 0 24 24"><path fill="#594ae2" d="M12 8l-6 6 1.41 1.41L12 10.83l4.59 4.58L18 14z" style="stroke:#594ae2;stroke-width:0.6px;"/></svg>
<svg class="r" style="left:318px;top:509.5px;" width="20" height="20" viewBox="0 0 24 24"><path fill="#594ae2" d="M16.59 8.59L12 13.17 7.41 8.59 6 10l6 6 6-6z" style="stroke:#594ae2;stroke-width:0.6px;"/></svg>
<div class="r" style="left:349px;top:505px;width:153px;height:31px;border:1px solid #594ae2;border-radius:4px;background:transparent;"></div>
<svg class="r" style="left:357px;top:511px;" width="18" height="18" viewBox="0 0 24 24"><path fill="#594ae2" d="M19 13h-6v6h-2v-6H5v-2h6V5h2v6h6v2z" style=""/></svg>
<div class="t" style="left:383.4px;top:514px;font-size:13px;color:#594ae2;letter-spacing:-0.2px;-webkit-text-stroke:0.35px currentColor;">ADD INGREDIENT</div>
<div class="r" style="left:510px;top:506px;width:1px;height:26px;background:#e6e6e6;"></div>
<svg class="r" style="left:522px;top:510px;" width="20" height="20" viewBox="0 0 24 24"><path fill="#594ae2" d="M6.99 11L3 15l3.99 4v-3H14v-2H6.99v-3zM21 9l-3.99-4v3H10v2h7.01v3L21 9z" style=""/></svg>
<svg class="r" style="left:555.5px;top:509.5px;" width="20" height="20" viewBox="0 0 24 24"><path fill="#f44336" d="M6 19c0 1.1.9 2 2 2h8c1.1 0 2-.9 2-2V7H6v12zM19 4h-3.5l-1-1h-5l-1 1H5v2h14V4z" style=""/></svg>
<svg class="r" style="left:590px;top:510px;" width="20" height="20" viewBox="0 0 20 20"><circle cx="3.30" cy="3.30" r="0.9" fill="#594ae2"/><circle cx="6.63" cy="3.30" r="0.9" fill="#594ae2"/><circle cx="3.30" cy="6.63" r="0.9" fill="#594ae2"/><circle cx="3.30" cy="9.96" r="0.9" fill="#594ae2"/><circle cx="3.30" cy="13.29" r="0.9" fill="#594ae2"/><circle cx="3.30" cy="16.62" r="0.9" fill="#594ae2"/><circle cx="6.63" cy="16.62" r="0.9" fill="#594ae2"/><circle cx="9.96" cy="16.62" r="0.9" fill="#594ae2"/><circle cx="13.29" cy="16.62" r="0.9" fill="#594ae2"/><circle cx="16.62" cy="16.62" r="0.9" fill="#594ae2"/><circle cx="16.62" cy="13.29" r="0.9" fill="#594ae2"/><path d="M9.4 3.3H14A2.6 2.6 0 0 1 16.6 5.9V10.5" fill="none" stroke="#594ae2" stroke-width="1.7" stroke-linecap="round"/></svg>
<svg class="r" style="left:623.6px;top:509.7px;" width="20" height="20" viewBox="0 0 24 24"><path fill="#594ae2" d="M3 17v2h6v-2H3zM3 5v2h10V5H3zm10 16v-2h8v-2h-8v-2h-2v6h2zM7 9v2H3v2h4v2h2V9H7zm14 4v-2H11v2h10zm-6-4h2V7h4V5h-4V3h-2v6z" style=""/></svg>
<div class="r" style="left:655.5px;top:506px;width:1px;height:26px;background:#e6e6e6;"></div>
<div class="r" style="left:668px;top:508px;width:53px;height:24px;background:#594ae2;border-radius:12px;"></div>
<div class="t" style="left:394.5px;width:600px;text-align:center;top:514px;font-size:12px;color:#fff;-webkit-text-stroke:0.45px #fff;">Neutro</div>
<div class="r" style="left:733px;top:509px;width:24px;height:24px;border:1px solid #594ae2;border-radius:4px;background:transparent;"></div>
<div class="t" style="left:445px;width:600px;text-align:center;top:517px;font-size:9px;color:#594ae2;font-weight:700;">I</div>
<div class="r" style="left:761px;top:509px;width:24px;height:24px;border:1px solid #594ae2;border-radius:4px;background:transparent;"></div>
<div class="t" style="left:473.29999999999995px;width:600px;text-align:center;top:517px;font-size:9px;color:#594ae2;font-weight:700;">F</div>
<div class="r" style="left:797px;top:519px;width:332px;height:2px;background:#c9c3f5;"></div>
<div class="r" style="left:957px;top:514px;width:12px;height:12px;background:#594ae2;border-radius:50%;"></div>
<div class="r" style="left:1141px;top:504px;width:58px;height:32px;border:1px solid #594ae2;border-radius:4px;background:transparent;"></div>
<div class="t" style="left:870px;width:600px;text-align:center;top:513px;font-size:14px;color:#594ae2;font-weight:700;letter-spacing:0.2px;">18.80</div>
<svg class="r" style="left:1624px;top:510px;" width="19.5" height="19.5" viewBox="0 0 24 24"><path fill="#594ae2" d="M12.5 8c-2.65 0-5.05.99-6.9 2.6L2 7v9h9l-3.62-3.62c1.39-1.16 3.16-1.88 5.12-1.88 3.54 0 6.55 2.31 7.6 5.5l2.37-.78C21.08 11.03 17.15 8 12.5 8z" style=""/></svg>
<svg class="r" style="left:1658.5px;top:510px;" width="19.5" height="19.5" viewBox="0 0 24 24"><path fill="#d9d9d9" d="M18.4 10.6C16.55 8.99 14.15 8 11.5 8c-4.65 0-8.58 3.03-9.96 7.22L3.9 16c1.05-3.19 4.05-5.5 7.6-5.5 1.95 0 3.73.72 5.12 1.88L13 16h9V7l-3.6 3.6z" style=""/></svg>
<svg class="r" style="left:1700px;top:509.8px;" width="20" height="20" viewBox="0 0 24 24"><path fill="#ff9800" d="M20 8h-2.81c-.45-.78-1.07-1.45-1.82-1.96L17 4.41 15.59 3l-2.17 2.17C12.96 5.06 12.49 5 12 5c-.49 0-.96.06-1.41.17L8.41 3 7 4.41l1.62 1.63C7.88 6.55 7.26 7.22 6.81 8H4v2h2.09c-.05.33-.09.66-.09 1v1H4v2h2v1c0 .34.04.67.09 1H4v2h2.81c1.04 1.79 2.97 3 5.19 3s4.15-1.21 5.19-3H20v-2h-2.09c.05-.33.09-.66.09-1v-1h2v-2h-2v-1c0-.34-.04-.67-.09-1H20V8zm-6 8h-4v-2h4v2zm0-4h-4v-2h4v2z" style=""/></svg>
<svg class="r" style="left:1734px;top:510.3px;" width="20" height="20" viewBox="0 0 24 24"><path fill="#594ae2" d="M14.67 5v14H9.33V5h5.34zm1 14H21V5h-5.33v14zm-7.34 0V5H3v14h5.33z" style=""/></svg>
<div class="t" style="left:281.5px;top:569px;font-size:14px;color:#333;font-weight:700;">Mix weight:</div>
<div class="r" style="left:365px;top:560px;width:80px;height:32px;border:1px solid #cfcfcf;border-radius:4px;background:#fff;"></div>
<div class="t" style="left:-159px;width:600px;text-align:right;top:569px;font-size:14px;color:#333;">3558.800</div>
<div class="t" style="left:452px;top:569px;font-size:14px;color:#808080;">g</div>
<div class="t" style="left:476px;top:569px;font-size:14px;color:#333;font-weight:700;">Final weight:</div>
<div class="r" style="left:568px;top:560px;width:80px;height:32px;border:1px solid #cfcfcf;border-radius:4px;background:#fff;"></div>
<div class="t" style="left:44px;width:600px;text-align:right;top:569px;font-size:14px;color:#333;">3558.800</div>
<div class="t" style="left:655px;top:569px;font-size:14px;color:#808080;">g</div>
<div class="t" style="left:679px;top:569px;font-size:14px;color:#333;font-weight:700;">Evaporation:</div>
<div class="r" style="left:769px;top:560px;width:80px;height:32px;border:1px solid #cfcfcf;border-radius:4px;background:#fff;"></div>
<div class="t" style="left:783px;top:569px;font-size:16px;color:#333;">0.00</div>
<div class="t" style="left:855px;top:569px;font-size:14px;color:#808080;">%</div>
<div class="t" style="left:884px;top:569px;font-size:14px;color:#333;font-weight:700;">Overrun:</div>
<div class="r" style="left:947px;top:560px;width:80px;height:32px;border:1px solid #cfcfcf;border-radius:4px;background:#fff;"></div>
<div class="t" style="left:962px;top:569px;font-size:16px;color:#333;">25</div>
<div class="t" style="left:1034px;top:569px;font-size:14px;color:#808080;">%</div>
<svg class="r" style="left:831px;top:564px;" width="13" height="24" viewBox="0 0 13 24"><path d="M1 7.5L6.5 2 12 7.5M1 16.5L6.5 22 12 16.5" fill="none" stroke="#333" stroke-width="1.6"/></svg>
<svg class="r" style="left:1009px;top:564px;" width="13" height="24" viewBox="0 0 13 24"><path d="M1 7.5L6.5 2 12 7.5M1 16.5L6.5 22 12 16.5" fill="none" stroke="#333" stroke-width="1.6"/></svg>
<div class="r" style="left:1066px;top:560px;width:111px;height:31.5px;background:#594ae2;border-radius:15px;"></div>
<svg class="r" style="left:1066px;top:562px;" width="26" height="26" viewBox="0 0 26 26"><path d="M7 18.6H16.8V20.7H7zM6.9 10.2L9.9 9.6L14.3 18.8H9.2zM9 9.5H14.6V11.1H9z" fill="#fff"/><circle cx="8.2" cy="9.8" r="1.9" fill="#fff"/><circle cx="8.2" cy="9.6" r="0.6" fill="#594ae2"/><path d="M19.2 8.3A2.7 2.7 0 1 0 19.2 12.2" fill="none" stroke="#fff" stroke-width="1.5"/></svg>
<div class="t" style="left:1092.8px;top:569px;font-size:14px;color:#fff;">Gelita Big Jr</div>
<svg class="r" style="left:1190px;top:567px;" width="20" height="20" viewBox="0 0 24 24"><path fill="#594ae2" d="M19.8,18.4L14,10.67V6.5l1.35-1.69C15.61,4.48,15.38,4,14.96,4H9.04C8.62,4,8.39,4.48,8.65,4.81L10,6.5v4.17L4.2,18.4C3.71,19.06,4.18,20,5,20h14C19.82,20,20.29,19.06,19.8,18.4z" style=""/></svg>
<div class="r" style="left:1597px;top:561px;width:87px;height:31px;border:1px solid #594ae2;border-radius:4px;background:transparent;"></div>
<svg class="r" style="left:1604px;top:566px;" width="19" height="19" viewBox="0 0 24 24"><path fill="#594ae2" d="M22.7 19l-9.1-9.1c.9-2.3.4-5-1.5-6.9-2-2-5-2.4-7.4-1.3L9 6 6 9 1.6 4.7C.4 7.1.9 10.1 2.9 12.1c1.9 1.9 4.6 2.4 6.9 1.5l9.1 9.1c.4.4 1 .4 1.4 0l2.3-2.3c.5-.4.5-1.1.1-1.4z" style=""/></svg>
<div class="t" style="left:1631px;top:569px;font-size:13px;color:#594ae2;letter-spacing:-0.1px;-webkit-text-stroke:0.35px currentColor;">TOOLS</div>
<svg class="r" style="left:1717px;top:564px;" width="24" height="24" viewBox="0 0 24 24"><path fill="#666" d="M19 8H5c-1.66 0-3 1.34-3 3v6h4v4h12v-4h4v-6c0-1.66-1.34-3-3-3zm-3 11H8v-5h8v5zm3-7c-.55 0-1-.45-1-1s.45-1 1-1 1 .45 1 1-.45 1-1 1zm-1-9H6v4h12V3z" style=""/></svg>
<div class="r" style="left:269px;top:616px;width:149px;height:30px;border:1px solid #594ae2;border-radius:4px;"></div>
<div class="t" style="left:325.8px;top:624px;font-size:13px;color:#594ae2;letter-spacing:-0.2px;-webkit-text-stroke:0.35px currentColor;">BALANCE</div>
<div class="r" style="left:269px;top:655px;width:149px;height:30px;border:1px solid #594ae2;border-radius:4px;"></div>
<div class="t" style="left:320.5px;top:663px;font-size:13px;color:#594ae2;letter-spacing:-0.2px;-webkit-text-stroke:0.35px currentColor;">SNAPSHOT</div>
<div class="r" style="left:269px;top:694px;width:149px;height:30px;border:1px solid #594ae2;border-radius:4px;"></div>
<div class="t" style="left:329.9px;top:702px;font-size:13px;color:#594ae2;letter-spacing:-0.2px;-webkit-text-stroke:0.35px currentColor;">CHARTS</div>
<div class="r" style="left:269px;top:733px;width:149px;height:30px;border:1px solid #594ae2;border-radius:4px;"></div>
<div class="t" style="left:317.8px;top:741px;font-size:13px;color:#594ae2;letter-spacing:-0.2px;-webkit-text-stroke:0.35px currentColor;">EDIT CHART</div>
<div class="r" style="left:269px;top:772px;width:149px;height:30px;border:1px solid #e0e0e0;border-radius:4px;"></div>
<div class="t" style="left:339.6px;top:780px;font-size:13px;color:#bdbdbd;letter-spacing:-0.2px;-webkit-text-stroke:0.35px currentColor;">SAVE</div>
<div class="r" style="left:269px;top:810px;width:149px;height:30px;border:1px solid #594ae2;border-radius:4px;"></div>
<div class="t" style="left:339.6px;top:818px;font-size:13px;color:#594ae2;letter-spacing:-0.2px;-webkit-text-stroke:0.35px currentColor;">DATA</div>
<div class="r" style="left:269px;top:849px;width:149px;height:30px;border:1px solid #594ae2;border-radius:4px;"></div>
<div class="t" style="left:320.6px;top:857px;font-size:13px;color:#594ae2;letter-spacing:-0.2px;-webkit-text-stroke:0.35px currentColor;">NUTRITION</div>
<div class="r" style="left:269px;top:888px;width:149px;height:30px;border:1px solid #594ae2;border-radius:4px;"></div>
<div class="t" style="left:324.9px;top:896px;font-size:13px;color:#594ae2;letter-spacing:-0.2px;-webkit-text-stroke:0.35px currentColor;">FREEZING</div>
<div class="r" style="left:418px;top:608px;width:1px;height:320px;background:#e8e8e8;"></div>
<svg class="r" style="left:298.7px;top:622.5px;" width="18.6" height="18.6" viewBox="0 0 24 24"><path fill="#594ae2" d="M13 7.83c.85-.3 1.53-.98 1.83-1.83H18l-3 7c0 1.66 1.57 3 3.5 3s3.5-1.34 3.5-3l-3-7h2V4h-6.17c-.41-1.17-1.52-2-2.83-2s-2.42.83-2.83 2H3v2h2l-3 7c0 1.66 1.57 3 3.5 3S9 14.66 9 13L6 6h3.17c.3.85.98 1.53 1.83 1.83V19H2v2h20v-2h-9V7.83zM20.37 13h-3.74l1.87-4.36L20.37 13zm-13 0H3.63L5.5 8.64 7.37 13zM12 6c-.55 0-1-.45-1-1s.45-1 1-1 1 .45 1 1-.45 1-1 1z" style=""/></svg>
<svg class="r" style="left:293.8px;top:662px;" width="18" height="18" viewBox="0 0 24 24"><path fill="#594ae2" d="M14.12 4l1.83 2H20v12H4V6h4.05l1.83-2h4.24M15 2H9L7.17 4H4c-1.1 0-2 .9-2 2v12c0 1.1.9 2 2 2h16c1.1 0 2-.9 2-2V6c0-1.1-.9-2-2-2h-3.17L15 2zm-3 7c1.65 0 3 1.35 3 3s-1.35 3-3 3-3-1.35-3-3 1.35-3 3-3m0-2c-2.76 0-5 2.24-5 5s2.24 5 5 5 5-2.24 5-5-2.24-5-5-5z" style=""/></svg>
<svg class="r" style="left:303px;top:701px;" width="18" height="18" viewBox="0 0 24 24"><path fill="#594ae2" d="M5 9.2h3V19H5zM10.6 5h2.8v14h-2.8zm5.6 8H19v6h-2.8z" style=""/></svg>
<svg class="r" style="left:290.5px;top:740px;" width="18.8" height="18.8" viewBox="0 0 24 24"><path fill="#594ae2" d="M3 17.25V21h3.75L17.81 9.94l-3.75-3.75L3 17.25zM20.71 7.04c.39-.39.39-1.02 0-1.41l-2.34-2.34c-.39-.39-1.02-.39-1.41 0l-1.83 1.83 3.75 3.75 1.83-1.83z" style=""/></svg>
<svg class="r" style="left:312.8px;top:778.4px;" width="18.4" height="18.4" viewBox="0 0 24 24"><path fill="#bdbdbd" d="M17 3H5c-1.11 0-2 .9-2 2v14c0 1.1.89 2 2 2h14c1.1 0 2-.9 2-2V7l-4-4zm-5 16c-1.66 0-3-1.34-3-3s1.34-3 3-3 3 1.34 3 3-1.34 3-3 3zm3-10H5V5h10v4z" style=""/></svg>
<svg class="r" style="left:315px;top:820px;" width="14" height="12" viewBox="0 0 14 12"><path d="M4.5 1H1.5V11H4.5M9.5 1H12.5V11H9.5" fill="none" stroke="#594ae2" stroke-width="2"/></svg>
<svg class="r" style="left:293.75px;top:856.25px;" width="18" height="18" viewBox="0 0 24 24"><path fill="#594ae2" d="M17.63 5.84C17.27 5.33 16.67 5 16 5L5 5.01C3.9 5.01 3 5.9 3 7v10c0 1.1.9 1.99 2 1.99L16 19c.67 0 1.27-.33 1.63-.84L22 12l-4.37-6.16z" style=""/></svg>
<svg class="r" style="left:298.5px;top:895.4px;" width="17" height="17" viewBox="0 0 24 24"><path fill="#594ae2" d="M3.5 18.49l6-6.01 4 4L22 6.92l-1.41-1.41-7.09 7.97-4-4L2 16.99z" style=""/></svg>
<div class="t" style="left:442.2px;top:622px;font-size:13px;color:#e53228;font-weight:700;">Gelato Fruit</div>
<svg class="r" style="left:0;top:0;font-family:Liberation Sans" width="1803" height="1191"><line x1="464" y1="887.5" x2="1746.5" y2="887.5" stroke="#d6d6d6" stroke-width="1"/><text x="459" y="890.80" font-size="11" fill="#555" text-anchor="end">0</text><line x1="464" y1="853.5" x2="1746.5" y2="853.5" stroke="#e3e3e3" stroke-width="1"/><text x="459" y="856.80" font-size="11" fill="#555" text-anchor="end">10</text><line x1="464" y1="818.5" x2="1746.5" y2="818.5" stroke="#e3e3e3" stroke-width="1"/><text x="459" y="821.80" font-size="11" fill="#555" text-anchor="end">20</text><line x1="464" y1="783.5" x2="1746.5" y2="783.5" stroke="#e3e3e3" stroke-width="1"/><text x="459" y="786.80" font-size="11" fill="#555" text-anchor="end">30</text><line x1="464" y1="749.5" x2="1746.5" y2="749.5" stroke="#e3e3e3" stroke-width="1"/><text x="459" y="752.80" font-size="11" fill="#555" text-anchor="end">40</text><line x1="464" y1="714.5" x2="1746.5" y2="714.5" stroke="#e3e3e3" stroke-width="1"/><text x="459" y="717.80" font-size="11" fill="#555" text-anchor="end">50</text><line x1="464" y1="680.5" x2="1746.5" y2="680.5" stroke="#e3e3e3" stroke-width="1"/><text x="459" y="683.80" font-size="11" fill="#555" text-anchor="end">60</text><line x1="464" y1="645.5" x2="1746.5" y2="645.5" stroke="#e3e3e3" stroke-width="1"/><text x="459" y="648.80" font-size="11" fill="#555" text-anchor="end">70</text><line x1="472.5" y1="645" x2="472.5" y2="895.5" stroke="#d0d0d0" stroke-width="1"/><line x1="614.5" y1="645" x2="614.5" y2="895.5" stroke="#e3e3e3" stroke-width="1"/><line x1="755.5" y1="645" x2="755.5" y2="895.5" stroke="#e3e3e3" stroke-width="1"/><line x1="896.5" y1="645" x2="896.5" y2="895.5" stroke="#e3e3e3" stroke-width="1"/><line x1="1038.5" y1="645" x2="1038.5" y2="895.5" stroke="#e3e3e3" stroke-width="1"/><line x1="1180.5" y1="645" x2="1180.5" y2="895.5" stroke="#e3e3e3" stroke-width="1"/><line x1="1321.5" y1="645" x2="1321.5" y2="895.5" stroke="#e3e3e3" stroke-width="1"/><line x1="1462.5" y1="645" x2="1462.5" y2="895.5" stroke="#e3e3e3" stroke-width="1"/><line x1="1604.5" y1="645" x2="1604.5" y2="895.5" stroke="#e3e3e3" stroke-width="1"/><line x1="1746.5" y1="645" x2="1746.5" y2="895.5" stroke="#e3e3e3" stroke-width="1"/><rect x="492.35" y="863.99" width="101.8" height="23.01" fill="#70bf73"/><rect x="492.35" y="863.99" width="101.8" height="1" fill="#55ad59"/><path d="M543.25 859.84V870.21" stroke="#111" stroke-width="2" fill="none"/><path d="M532.75 859.84H553.75M532.75 870.21H553.75" stroke="#222" stroke-width="1.7" fill="none"/><text x="492.35" y="855.99" font-size="12" font-weight="700" fill="#3a3a3a">6.8</text><text x="543.45" y="911" font-size="12.4" fill="#3c3c3c" text-anchor="middle" letter-spacing="0.12" stroke="#3c3c3c" stroke-width="0.25">Milk fat</text><rect x="633.85" y="863.65" width="101.8" height="23.35" fill="#70bf73"/><rect x="633.85" y="863.65" width="101.8" height="1" fill="#55ad59"/><path d="M684.75 852.93V870.21" stroke="#111" stroke-width="2" fill="none"/><path d="M674.25 852.93H695.25M674.25 870.21H695.25" stroke="#222" stroke-width="1.7" fill="none"/><text x="633.85" y="855.65" font-size="12" font-weight="700" fill="#3a3a3a">6.9</text><text x="684.95" y="911" font-size="12.4" fill="#3c3c3c" text-anchor="middle" letter-spacing="0.12" stroke="#3c3c3c" stroke-width="0.25">Total fat</text><rect x="775.35" y="756.82" width="101.8" height="130.18" fill="#70bf73"/><rect x="775.35" y="756.82" width="101.8" height="1" fill="#55ad59"/><path d="M826.25 749.21V766.50" stroke="#111" stroke-width="2" fill="none"/><path d="M815.75 749.21H836.75M815.75 766.50H836.75" stroke="#222" stroke-width="1.7" fill="none"/><text x="775.35" y="748.82" font-size="12" font-weight="700" fill="#3a3a3a">37.8</text><text x="826.45" y="911" font-size="12.4" fill="#3c3c3c" text-anchor="middle" letter-spacing="0.12" stroke="#3c3c3c" stroke-width="0.25">Total solids</text><rect x="916.85" y="672.47" width="101.8" height="214.53" fill="#70bf73"/><rect x="916.85" y="672.47" width="101.8" height="1" fill="#55ad59"/><path d="M967.75 662.79V680.07" stroke="#111" stroke-width="2" fill="none"/><path d="M957.25 662.79H978.25M957.25 680.07H978.25" stroke="#222" stroke-width="1.7" fill="none"/><text x="916.85" y="664.47" font-size="12" font-weight="700" fill="#3a3a3a">62.2</text><text x="967.95" y="911" font-size="12.4" fill="#3c3c3c" text-anchor="middle" letter-spacing="0.12" stroke="#3c3c3c" stroke-width="0.25">Water</text><rect x="1058.35" y="845.67" width="101.8" height="41.33" fill="#70bf73"/><rect x="1058.35" y="845.67" width="101.8" height="1" fill="#55ad59"/><path d="M1109.25 842.56V849.47" stroke="#111" stroke-width="2" fill="none"/><path d="M1098.75 842.56H1119.75M1098.75 849.47H1119.75" stroke="#222" stroke-width="1.7" fill="none"/><text x="1058.35" y="837.67" font-size="12" font-weight="700" fill="#3a3a3a">-12.1</text><text x="1109.45" y="911" font-size="12.4" fill="#3c3c3c" text-anchor="middle" letter-spacing="0.12" stroke="#3c3c3c" stroke-width="0.25">Serving temp gelato</text><rect x="1199.85" y="826.93" width="101.8" height="60.07" fill="#70bf73"/><rect x="1199.85" y="826.93" width="101.8" height="1" fill="#55ad59"/><path d="M1250.75 823.54V830.46" stroke="#111" stroke-width="2" fill="none"/><path d="M1240.25 823.54H1261.25M1240.25 830.46H1261.25" stroke="#222" stroke-width="1.7" fill="none"/><text x="1199.85" y="818.93" font-size="12" font-weight="700" fill="#3a3a3a">175.2</text><text x="1250.95" y="911" font-size="12.4" fill="#3c3c3c" text-anchor="middle" letter-spacing="0.12" stroke="#3c3c3c" stroke-width="0.25">POD</text><rect x="1341.35" y="769.96" width="101.8" height="117.04" fill="#70bf73"/><rect x="1341.35" y="769.96" width="101.8" height="1" fill="#55ad59"/><path d="M1392.25 766.50V818.36" stroke="#111" stroke-width="2" fill="none"/><path d="M1381.75 766.50H1402.75M1381.75 818.36H1402.75" stroke="#222" stroke-width="1.7" fill="none"/><text x="1341.35" y="761.96" font-size="12" font-weight="700" fill="#3a3a3a">0.3</text><text x="1392.45" y="911" font-size="12.4" fill="#3c3c3c" text-anchor="middle" letter-spacing="0.12" stroke="#3c3c3c" stroke-width="0.25">Stabilizers/Water</text><rect x="1482.85" y="778.25" width="101.8" height="108.75" fill="#70bf73"/><rect x="1482.85" y="778.25" width="101.8" height="1" fill="#55ad59"/><path d="M1533.75 714.64V783.79" stroke="#111" stroke-width="2" fill="none"/><path d="M1523.25 714.64H1544.25M1523.25 783.79H1544.25" stroke="#222" stroke-width="1.7" fill="none"/><text x="1482.85" y="770.25" font-size="12" font-weight="700" fill="#3a3a3a">0.3</text><text x="1533.95" y="911" font-size="12.4" fill="#3c3c3c" text-anchor="middle" letter-spacing="0.12" stroke="#3c3c3c" stroke-width="0.25">Emulsifiers</text><rect x="1624.35" y="868.83" width="101.8" height="18.17" fill="#70bf73"/><rect x="1624.35" y="868.83" width="101.8" height="1" fill="#55ad59"/><path d="M1675.25 852.93V887.50" stroke="#111" stroke-width="2" fill="none"/><path d="M1664.75 852.93H1685.75M1664.75 887.50H1685.75" stroke="#222" stroke-width="1.7" fill="none"/><text x="1624.35" y="860.83" font-size="12" font-weight="700" fill="#3a3a3a">5.4</text><text x="1675.45" y="911" font-size="12.4" fill="#3c3c3c" text-anchor="middle" letter-spacing="0.12" stroke="#3c3c3c" stroke-width="0.25">Lactose concentration</text></svg>
<div class="t" style="left:281.4px;top:951px;font-size:14px;color:#333;letter-spacing:0.4px;">Scoopability at -13°C to -16°C</div>
<div class="r" style="left:284px;top:972px;width:1312px;height:15px;background:linear-gradient(to right,#ff6464 0%,#ff6464 29.8%,#66ff66 44.4%,#66ff66 66%,#ff6464 82.3%,#ff6464 100%);"></div>
<div class="r" style="left:975px;top:978px;width:170px;height:4px;background:#000;"></div>
<div class="r" style="left:975px;top:974px;width:2px;height:12px;background:#000;"></div>
<div class="r" style="left:1143px;top:974px;width:2px;height:12px;background:#000;"></div>
<div class="t" style="left:286.4px;top:993px;font-size:12px;color:#666;font-weight:700;">Soft</div>
<div class="t" style="left:994.2px;width:600px;text-align:right;top:993px;font-size:12px;color:#666;font-weight:700;">Hard</div>
<div class="r" style="left:1553px;top:957px;width:12px;height:2px;background:#594ae2;"></div>
<div class="r" style="left:1581px;top:957px;width:12px;height:2px;background:#594ae2;"></div>
<div class="r" style="left:1586px;top:952px;width:2px;height:12px;background:#594ae2;"></div>
<div class="t" style="left:1632px;top:951px;font-size:14px;color:#444;">POD</div>
<div class="r" style="left:1711px;top:957px;width:12px;height:2px;background:#594ae2;"></div>
<div class="r" style="left:1739px;top:957px;width:12px;height:2px;background:#594ae2;"></div>
<div class="r" style="left:1744px;top:952px;width:2px;height:12px;background:#594ae2;"></div>
<div class="t" style="left:1394px;width:600px;text-align:center;top:976px;font-size:20px;color:#333;font-weight:700;">175</div>
<div class="t" style="left:285.6px;top:1043px;font-size:20px;color:#424242;letter-spacing:-0.3px;">Recipe Data</div>
<svg class="r" style="left:1729.7px;top:1041.5px;" width="20.4" height="20.4" viewBox="0 0 24 24"><path fill="#666" d="M19.14 12.94c.04-.3.06-.61.06-.94 0-.32-.02-.64-.07-.94l2.03-1.58c.18-.14.23-.41.12-.61l-1.92-3.32c-.12-.22-.37-.29-.59-.22l-2.39.96c-.5-.38-1.03-.7-1.62-.94l-.36-2.54c-.04-.24-.24-.41-.48-.41h-3.84c-.24 0-.43.17-.47.41l-.36 2.54c-.59.24-1.13.57-1.62.94l-2.39-.96c-.22-.08-.47 0-.59.22L2.74 8.87c-.12.21-.08.47.12.61l2.03 1.58c-.05.3-.09.63-.09.94s.02.64.07.94l-2.03 1.58c-.18.14-.23.41-.12.61l1.92 3.32c.12.22.37.29.59.22l2.39-.96c.5.38 1.03.7 1.62.94l.36 2.54c.05.24.24.41.48.41h3.84c.24 0 .44-.17.47-.41l.36-2.54c.59-.24 1.13-.56 1.62-.94l2.39.96c.22.08.47 0 .59-.22l1.92-3.32c.12-.22.07-.47-.12-.61l-2.01-1.58zM12 15.6c-1.98 0-3.6-1.62-3.6-3.6s1.62-3.6 3.6-3.6 3.6 1.62 3.6 3.6-1.62 3.6-3.6 3.6z" style=""/></svg>
<div class="r" style="left:285.5px;top:1092px;width:159px;height:69.5px;border:1px solid #ece8d4;border-radius:10px;background:linear-gradient(135deg,#fefdf6,#fcf8e6);box-shadow:0 1px 3px rgba(0,0,0,0.08);"></div>
<div class="t" style="left:65.0px;width:600px;text-align:center;top:1107px;font-size:16.5px;color:#111;font-weight:700;">175.18</div>
<div class="t" style="left:65.0px;width:600px;text-align:center;top:1131px;font-size:16px;color:#2f44b0;letter-spacing:0.06px;">Sweetness (POD)</div>
<div class="r" style="left:457.35px;top:1092px;width:159px;height:69.5px;border:1px solid #ece8d4;border-radius:10px;background:linear-gradient(135deg,#fefdf6,#fcf8e6);box-shadow:0 1px 3px rgba(0,0,0,0.08);"></div>
<div class="t" style="left:236.85000000000002px;width:600px;text-align:center;top:1107px;font-size:16.5px;color:#111;font-weight:700;">-3.1°C, 26.4°F</div>
<div class="t" style="left:236.85000000000002px;width:600px;text-align:center;top:1131px;font-size:16px;color:#2f44b0;letter-spacing:0.06px;">Freezing Point</div>
<div class="r" style="left:629.2px;top:1092px;width:159px;height:69.5px;border:1px solid #ece8d4;border-radius:10px;background:linear-gradient(135deg,#fefdf6,#fcf8e6);box-shadow:0 1px 3px rgba(0,0,0,0.08);"></div>
<div class="t" style="left:408.70000000000005px;width:600px;text-align:center;top:1107px;font-size:16.5px;color:#111;font-weight:700;">-15.2°C, 4.6°F</div>
<div class="t" style="left:408.70000000000005px;width:600px;text-align:center;top:1131px;font-size:16px;color:#2f44b0;letter-spacing:0.06px;">Serving Temp</div>
<div class="r" style="left:801.05px;top:1092px;width:159px;height:69.5px;border:1px solid #ece8d4;border-radius:10px;background:linear-gradient(135deg,#fefdf6,#fcf8e6);box-shadow:0 1px 3px rgba(0,0,0,0.08);"></div>
<div class="t" style="left:580.55px;width:600px;text-align:center;top:1107px;font-size:16.5px;color:#111;font-weight:700;">-12.1°C, 10.3°F</div>
<div class="t" style="left:580.55px;width:600px;text-align:center;top:1131px;font-size:16px;color:#2f44b0;letter-spacing:0.06px;">Gelato Temp</div>
<div class="r" style="left:972.9px;top:1092px;width:159px;height:69.5px;border:1px solid #ece8d4;border-radius:10px;background:linear-gradient(135deg,#fefdf6,#fcf8e6);box-shadow:0 1px 3px rgba(0,0,0,0.08);"></div>
<div class="t" style="left:752.4000000000001px;width:600px;text-align:center;top:1107px;font-size:16.5px;color:#111;font-weight:700;">-7.9°C, 17.8°F</div>
<div class="t" style="left:752.4000000000001px;width:600px;text-align:center;top:1131px;font-size:16px;color:#2f44b0;letter-spacing:0.06px;">Extraction Temp</div>
<div class="r" style="left:1144.75px;top:1092px;width:159px;height:69.5px;border:1px solid #ece8d4;border-radius:10px;background:linear-gradient(135deg,#fefdf6,#fcf8e6);box-shadow:0 1px 3px rgba(0,0,0,0.08);"></div>
<div class="t" style="left:924.25px;width:600px;text-align:center;top:1107px;font-size:16.5px;color:#111;font-weight:700;">3.98 L</div>
<div class="t" style="left:924.25px;width:600px;text-align:center;top:1131px;font-size:16px;color:#2f44b0;letter-spacing:0.06px;">Mix Volume</div>
<div class="r" style="left:1316.6px;top:1092px;width:159px;height:69.5px;border:1px solid #ece8d4;border-radius:10px;background:linear-gradient(135deg,#fefdf6,#fcf8e6);box-shadow:0 1px 3px rgba(0,0,0,0.08);"></div>
<div class="t" style="left:1096.1px;width:600px;text-align:center;top:1107px;font-size:16.5px;color:#111;font-weight:700;">4.97 L</div>
<div class="t" style="left:1096.1px;width:600px;text-align:center;top:1131px;font-size:16px;color:#2f44b0;letter-spacing:0.06px;">Ice Cream Volume</div>
</body></html>
